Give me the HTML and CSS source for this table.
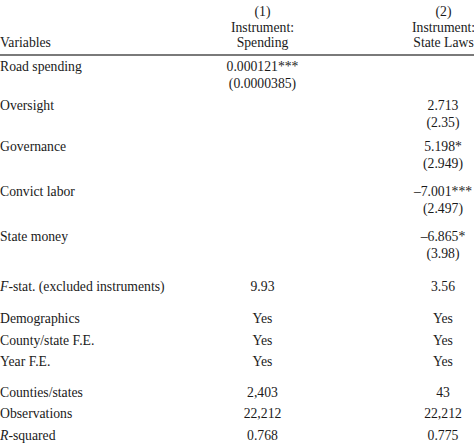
FILE: index.html
```html
<!DOCTYPE html>
<html lang="en">
<head>
<meta charset="utf-8">
<title>Regression table</title>
<link rel="stylesheet" href="styles.css">
</head>
<body>
<div class="table">
  <div class="row head">
    <div class="var">Variables</div>
    <div class="c1"><div>(1)</div><div>Instrument:</div><div>Spending</div></div>
    <div class="c2"><div>(2)</div><div>Instrument:</div><div>State Laws</div></div>
  </div>

  <div class="row pair gap-road">
    <div class="var">Road spending</div>
    <div class="c1"><div>0.000121***</div><div>(0.0000385)</div></div>
    <div class="c2"></div>
  </div>
  <div class="row pair gap-oversight">
    <div class="var">Oversight</div>
    <div class="c1"></div>
    <div class="c2"><div>2.713</div><div>(2.35)</div></div>
  </div>
  <div class="row pair gap-gov">
    <div class="var">Governance</div>
    <div class="c1"></div>
    <div class="c2"><div>5.198*</div><div>(2.949)</div></div>
  </div>
  <div class="row pair gap-convict">
    <div class="var">Convict labor</div>
    <div class="c1"></div>
    <div class="c2"><div>&ndash;7.001***</div><div>(2.497)</div></div>
  </div>
  <div class="row pair gap-state">
    <div class="var">State money</div>
    <div class="c1"></div>
    <div class="c2"><div>&ndash;6.865*</div><div>(3.98)</div></div>
  </div>

  <div class="row single gap-fstat">
    <div class="var"><i>F</i>-stat. (excluded instruments)</div>
    <div class="c1">9.93</div>
    <div class="c2">3.56</div>
  </div>

  <div class="group gap-fe">
    <div class="row single">
      <div class="var">Demographics</div>
      <div class="c1">Yes</div>
      <div class="c2">Yes</div>
    </div>
    <div class="row single">
      <div class="var">County/state F.E.</div>
      <div class="c1">Yes</div>
      <div class="c2">Yes</div>
    </div>
    <div class="row single">
      <div class="var">Year F.E.</div>
      <div class="c1">Yes</div>
      <div class="c2">Yes</div>
    </div>
  </div>

  <div class="group gap-n">
    <div class="row single">
      <div class="var">Counties/states</div>
      <div class="c1">2,403</div>
      <div class="c2">43</div>
    </div>
    <div class="row single">
      <div class="var">Observations</div>
      <div class="c1">22,212</div>
      <div class="c2">22,212</div>
    </div>
    <div class="row single">
      <div class="var"><i>R</i>-squared</div>
      <div class="c1">0.768</div>
      <div class="c2">0.775</div>
    </div>
  </div>
</div>
</body>
</html>
```

FILE: styles.css
```css
html, body {
  margin: 0;
  padding: 0;
  background: #ffffff;
}

body {
  font-family: "Liberation Serif", "Times New Roman", serif;
  font-size: 13.7px;
  color: #1a1a1a;
  overflow: hidden;
}

.table {
  width: 474px;
}

.row {
  display: grid;
  grid-template-columns: 200px 125px 1fr;
}

.var {
  white-space: nowrap;
}

.c1 {
  text-align: center;
  white-space: nowrap;
}

.c2 {
  text-align: center;
  white-space: nowrap;
  padding-left: 87px;
}

.head {
  line-height: 15.25px;
  padding-top: 4.25px;
  padding-bottom: 4px;
  border-bottom: 2px solid #7a7a7a;
  align-items: end;
}

.pair {
  line-height: 17px;
}

.single {
  line-height: 21.5px;
}

.gap-road { margin-top: 2.4px; }
.gap-oversight { margin-top: 4.5px; }
.gap-gov { margin-top: 7.5px; }
.gap-convict { margin-top: 10.5px; }
.gap-state { margin-top: 11px; }
.gap-fstat { margin-top: 13.7px; }
.gap-fe { margin-top: 11px; }
.gap-n { margin-top: 9px; }
```
